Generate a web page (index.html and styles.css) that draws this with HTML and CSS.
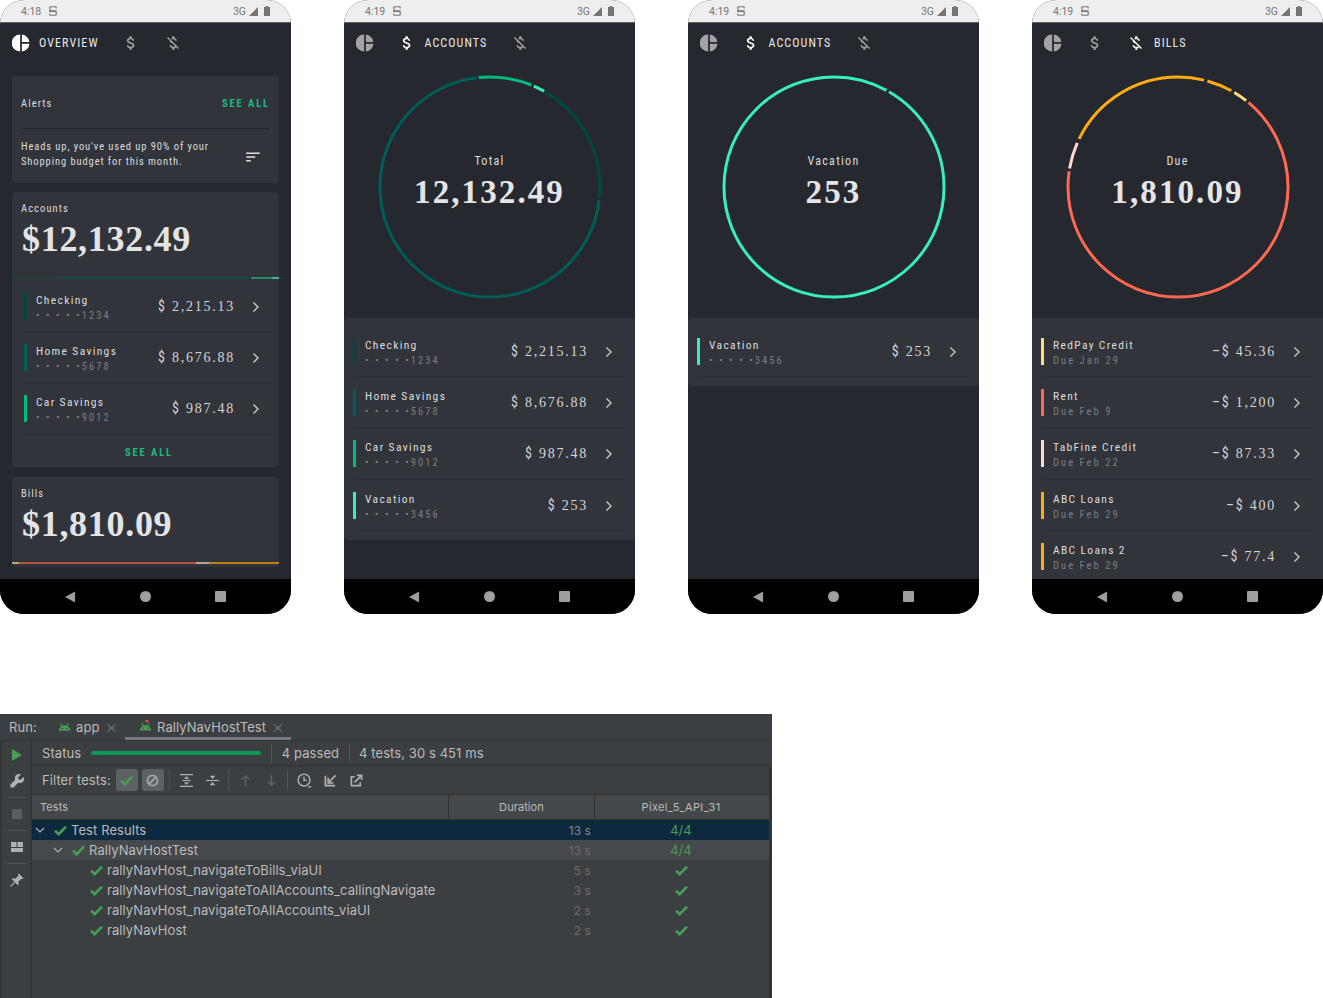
FILE: index.html
```html
<!DOCTYPE html>
<html lang="en">
<head>
<meta charset="utf-8">
<title>Rally tests</title>
<link rel="stylesheet" href="styles.css">
</head>
<body>
<svg class="sprite" aria-hidden="true">
  <symbol id="pie" viewBox="0 0 16 16"><path d="M7.2.5v15A7.5 7.5 0 0 1 7.2.5z"/><path d="M8.8.5A7.5 7.5 0 0 1 15.500 7H8.800z"/><path d="M8.8 8.600h6.700a7.500 7.500 0 0 1-6.700 6.900z"/></symbol>
  <symbol id="dollar" viewBox="0 0 24 24"><path d="M11.8 10.9c-2.27-.59-3-1.2-3-2.15 0-1.09 1.01-1.85 2.7-1.85 1.78 0 2.44.85 2.5 2.1h2.21c-.07-1.72-1.12-3.3-3.21-3.81V3h-3v2.16c-1.94.42-3.5 1.68-3.5 3.61 0 2.31 1.91 3.46 4.7 4.13 2.5.6 3 1.48 3 2.41 0 .69-.49 1.79-2.7 1.79-2.06 0-2.87-.92-2.98-2.1h-2.2c.12 2.19 1.76 3.42 3.68 3.83V21h3v-2.15c1.95-.37 3.5-1.5 3.5-3.55 0-2.84-2.43-3.81-4.7-4.4z"/></symbol>
  <symbol id="off" viewBox="0 0 24 24"><path d="M12.5 6.9c1.78 0 2.44.85 2.5 2.1h2.21c-.07-1.72-1.12-3.3-3.21-3.81V3h-3v2.16c-.53.12-1.03.3-1.48.54l1.47 1.47c.41-.17.91-.27 1.51-.27zM5.33 4.06L4.06 5.33 7.5 8.77c0 2.08 1.56 3.21 3.91 3.91l3.51 3.51c-.34.48-1.05.91-2.42.91-2.06 0-2.87-.92-2.98-2.1h-2.2c.12 2.19 1.76 3.42 3.68 3.83V21h3v-2.15c.96-.18 1.82-.55 2.45-1.12l2.22 2.22 1.27-1.27L5.33 4.06z"/></symbol>
  <symbol id="sort" viewBox="0 0 24 24"><path d="M3 18h6v-2H3v2zM3 6v2h18V6H3zm0 7h12v-2H3v2z"/></symbol>
  <symbol id="chev" viewBox="0 0 8 12"><path d="M1.5 1.5 6 6l-4.5 4.5" fill="none" stroke="currentColor" stroke-width="1.4"/></symbol>
  <symbol id="sig" viewBox="0 0 10 10"><path d="M10 0v10H0z"/></symbol>
  <symbol id="batt" viewBox="0 0 6 10"><path d="M2 0h2v1h2v9H0V1h2z"/></symbol>
  <symbol id="sim" viewBox="0 0 10 12"><path d="M2.500 1.200h5a1.300 1.300 0 0 1 1.300 1.300v1H7.600v-1a.3.3 0 0 0-.3-.3H2.700a.3.3 0 0 0-.3.3v2.700h5.200a1.300 1.300 0 0 1 1.200 1.300v2.900a1.300 1.300 0 0 1-1.300 1.300h-5a1.300 1.300 0 0 1-1.300-1.300v-1h1.200v1c0 .2.1.3.3.3h4.600c.2 0 .3-.1.3-.3V6.900H1.200V2.500a1.300 1.300 0 0 1 1.300-1.300z"/></symbol>
  <symbol id="check" viewBox="0 0 14 12"><path d="M1 6.300 5 10 13 1.800" fill="none" stroke="#499c54" stroke-width="3"/></symbol>
  <symbol id="droid" viewBox="0 0 14 10"><path d="M1 9a6 6 0 0 1 12 0z" fill="#499c54"/><path d="M3 1l1.600 3M11 1 9.400 4" stroke="#499c54" stroke-width="1.100" fill="none"/><circle cx="4.500" cy="6.500" r=".8" fill="#3c3f41"/><circle cx="9.500" cy="6.500" r=".8" fill="#3c3f41"/></symbol>
  <symbol id="back" viewBox="0 0 12 12"><path d="M11 0v12L0 6z"/></symbol>
</svg>

<main class="phones">

  <section class="phone">
    <header class="status"><span class="clock">4:18</span><svg class="ic-sim"><use href="#sim"/></svg><span class="net">3G</span><svg class="ic-sig"><use href="#sig"/></svg><svg class="ic-batt"><use href="#batt"/></svg></header>
    <nav class="tabs">
      <svg class="tab-ic on"><use href="#pie"/></svg><span class="tab-label">OVERVIEW</span>
      <svg class="tab-ic"><use href="#dollar"/></svg>
      <svg class="tab-ic"><use href="#off"/></svg>
    </nav>
    <div class="screen overview">
      <article class="card alerts">
        <div class="alerts-head"><span class="label">Alerts</span><span class="see">SEE ALL</span></div>
        <div class="alerts-body"><p class="alert-text">Heads up, you've used up 90% of your<br>Shopping budget for this month.</p><svg class="sort-ic"><use href="#sort"/></svg></div>
      </article>
      <article class="card accounts-card">
        <div class="label card-label">Accounts</div>
        <div class="big">$12,132.49</div>
        <div class="meter">
          <i class="m-check w48"></i><i class="m-home w191"></i><i class="m-car w21"></i><i class="m-vac w6"></i>
        </div>
        <div class="card-rows">
          <div class="row"><i class="bar c-check"></i><div class="row-text"><div class="row-name">Checking</div><div class="row-sub">• • • • •1234</div></div><div class="amt"><span class="cur">$</span> 2,215.13</div><svg class="chev"><use href="#chev"/></svg></div>
          <div class="row"><i class="bar c-home"></i><div class="row-text"><div class="row-name">Home Savings</div><div class="row-sub">• • • • •5678</div></div><div class="amt"><span class="cur">$</span> 8,676.88</div><svg class="chev"><use href="#chev"/></svg></div>
          <div class="row"><i class="bar c-car"></i><div class="row-text"><div class="row-name">Car Savings</div><div class="row-sub">• • • • •9012</div></div><div class="amt"><span class="cur">$</span> 987.48</div><svg class="chev"><use href="#chev"/></svg></div>
        </div>
        <div class="see see-center">SEE ALL</div>
      </article>
      <article class="card bills-card">
        <div class="label card-label">Bills</div>
        <div class="big">$1,810.09</div>
        <div class="meter bills-meter">
          <i class="m-red w7"></i><i class="m-rent w177"></i><i class="m-tab w13"></i><i class="m-abc w70"></i>
        </div>
      </article>
    </div>
    <footer class="navbar"><svg class="nav-back"><use href="#back"/></svg><i class="nav-home"></i><i class="nav-recent"></i></footer>
  </section>

  <section class="phone">
    <header class="status"><span class="clock">4:19</span><svg class="ic-sim"><use href="#sim"/></svg><span class="net">3G</span><svg class="ic-sig"><use href="#sig"/></svg><svg class="ic-batt"><use href="#batt"/></svg></header>
    <nav class="tabs">
      <svg class="tab-ic"><use href="#pie"/></svg>
      <svg class="tab-ic on"><use href="#dollar"/></svg><span class="tab-label">ACCOUNTS</span>
      <svg class="tab-ic"><use href="#off"/></svg>
    </nav>
    <div class="screen">
      <div class="ring-wrap">
        <svg class="ring" viewBox="0 0 224 224">
          <circle class="arc" pathLength="360" cx="112" cy="112" r="110" stroke="#04b97f" stroke-dasharray="22 332 6 0"/>
          <circle class="arc" pathLength="360" cx="112" cy="112" r="110" stroke="#37efba" stroke-dasharray="6 360" stroke-dashoffset="-23.500"/>
          <circle class="arc" pathLength="360" cx="112" cy="112" r="110" stroke="#004940" stroke-dasharray="65 360" stroke-dashoffset="-30.500"/>
          <circle class="arc" pathLength="360" cx="112" cy="112" r="110" stroke="#005d57" stroke-dasharray="256 360" stroke-dashoffset="-97"/>
        </svg>
        <div class="ring-text"><div class="ring-label">Total</div><div class="ring-num">12,132.49</div></div>
      </div>
      <div class="list">
        <div class="row"><i class="bar c-check"></i><div class="row-text"><div class="row-name">Checking</div><div class="row-sub">• • • • •1234</div></div><div class="amt"><span class="cur">$</span> 2,215.13</div><svg class="chev"><use href="#chev"/></svg></div>
        <div class="row"><i class="bar c-home"></i><div class="row-text"><div class="row-name">Home Savings</div><div class="row-sub">• • • • •5678</div></div><div class="amt"><span class="cur">$</span> 8,676.88</div><svg class="chev"><use href="#chev"/></svg></div>
        <div class="row"><i class="bar c-car"></i><div class="row-text"><div class="row-name">Car Savings</div><div class="row-sub">• • • • •9012</div></div><div class="amt"><span class="cur">$</span> 987.48</div><svg class="chev"><use href="#chev"/></svg></div>
        <div class="row"><i class="bar c-vac"></i><div class="row-text"><div class="row-name">Vacation</div><div class="row-sub">• • • • •3456</div></div><div class="amt"><span class="cur">$</span> 253</div><svg class="chev"><use href="#chev"/></svg></div>
      </div>
    </div>
    <footer class="navbar"><svg class="nav-back"><use href="#back"/></svg><i class="nav-home"></i><i class="nav-recent"></i></footer>
  </section>

  <section class="phone">
    <header class="status"><span class="clock">4:19</span><svg class="ic-sim"><use href="#sim"/></svg><span class="net">3G</span><svg class="ic-sig"><use href="#sig"/></svg><svg class="ic-batt"><use href="#batt"/></svg></header>
    <nav class="tabs">
      <svg class="tab-ic"><use href="#pie"/></svg>
      <svg class="tab-ic on"><use href="#dollar"/></svg><span class="tab-label">ACCOUNTS</span>
      <svg class="tab-ic"><use href="#off"/></svg>
    </nav>
    <div class="screen">
      <div class="ring-wrap">
        <svg class="ring" viewBox="0 0 224 224">
          <circle class="arc" pathLength="360" cx="112" cy="112" r="110" stroke="#37efba" stroke-dasharray="28.500 1.500 330 0"/>
        </svg>
        <div class="ring-text"><div class="ring-label">Vacation</div><div class="ring-num">253</div></div>
      </div>
      <div class="list">
        <div class="row"><i class="bar c-vac"></i><div class="row-text"><div class="row-name">Vacation</div><div class="row-sub">• • • • •3456</div></div><div class="amt"><span class="cur">$</span> 253</div><svg class="chev"><use href="#chev"/></svg></div>
      </div>
    </div>
    <footer class="navbar"><svg class="nav-back"><use href="#back"/></svg><i class="nav-home"></i><i class="nav-recent"></i></footer>
  </section>

  <section class="phone">
    <header class="status"><span class="clock">4:19</span><svg class="ic-sim"><use href="#sim"/></svg><span class="net">3G</span><svg class="ic-sig"><use href="#sig"/></svg><svg class="ic-batt"><use href="#batt"/></svg></header>
    <nav class="tabs">
      <svg class="tab-ic"><use href="#pie"/></svg>
      <svg class="tab-ic"><use href="#dollar"/></svg>
      <svg class="tab-ic on"><use href="#off"/></svg><span class="tab-label">BILLS</span>
    </nav>
    <div class="screen">
      <div class="ring-wrap">
        <svg class="ring" viewBox="0 0 224 224">
          <circle class="arc" pathLength="360" cx="112" cy="112" r="110" stroke="#ffdc78" stroke-dasharray="7.500 360" stroke-dashoffset="-30.800"/>
          <circle class="arc" pathLength="360" cx="112" cy="112" r="110" stroke="#ff6951" stroke-dasharray="238.500 360" stroke-dashoffset="-39.800"/>
          <circle class="arc" pathLength="360" cx="112" cy="112" r="110" stroke="#ffd7d0" stroke-dasharray="14 360" stroke-dashoffset="-279.700"/>
          <circle class="arc" pathLength="360" cx="112" cy="112" r="110" stroke="#ffac12" stroke-dasharray="13.700 282.300 64 0"/>
          <circle class="arc" pathLength="360" cx="112" cy="112" r="110" stroke="#ffac12" stroke-dasharray="13.500 360" stroke-dashoffset="-15.500"/>
        </svg>
        <div class="ring-text"><div class="ring-label">Due</div><div class="ring-num">1,810.09</div></div>
      </div>
      <div class="list list-clip">
        <div class="row"><i class="bar c-red"></i><div class="row-text"><div class="row-name">RedPay Credit</div><div class="row-sub">Due Jan 29</div></div><div class="amt"><span class="cur">–$</span> 45.36</div><svg class="chev"><use href="#chev"/></svg></div>
        <div class="row"><i class="bar c-rent"></i><div class="row-text"><div class="row-name">Rent</div><div class="row-sub">Due Feb 9</div></div><div class="amt"><span class="cur">–$</span> 1,200</div><svg class="chev"><use href="#chev"/></svg></div>
        <div class="row"><i class="bar c-tab"></i><div class="row-text"><div class="row-name">TabFine Credit</div><div class="row-sub">Due Feb 22</div></div><div class="amt"><span class="cur">–$</span> 87.33</div><svg class="chev"><use href="#chev"/></svg></div>
        <div class="row"><i class="bar c-abc"></i><div class="row-text"><div class="row-name">ABC Loans</div><div class="row-sub">Due Feb 29</div></div><div class="amt"><span class="cur">–$</span> 400</div><svg class="chev"><use href="#chev"/></svg></div>
        <div class="row"><i class="bar c-abc"></i><div class="row-text"><div class="row-name">ABC Loans 2</div><div class="row-sub">Due Feb 29</div></div><div class="amt"><span class="cur">–$</span> 77.4</div><svg class="chev"><use href="#chev"/></svg></div>
      </div>
    </div>
    <footer class="navbar"><svg class="nav-back"><use href="#back"/></svg><i class="nav-home"></i><i class="nav-recent"></i></footer>
  </section>
</main>

<section class="ide">
  <div class="ide-tabs">
    <span class="run-label">Run:</span>
    <div class="ide-tab"><svg class="droid"><use href="#droid"/></svg><span>app</span><span class="x">×</span></div>
    <div class="ide-tab active"><svg class="droid flagged" viewBox="0 0 14 13"><use href="#droid" y="3" height="10" width="14"/><path d="M7 4V0.500h3.500V3H7" fill="#c75450"/></svg><span>RallyNavHostTest</span><span class="x">×</span></div>
  </div>
  <div class="ide-main">
    <aside class="ide-side">
      <svg class="side-ic" viewBox="0 0 12 14"><path d="M1 1v12l10-6z" fill="#499c54"/></svg>
      <svg class="side-ic" viewBox="0 0 16 16"><path d="M15.500 3.500 12.300 6.700 9.800 6.200 9.300 3.700 12.500.500A4.700 4.700 0 0 0 6 6.500L.5 12v3.500H4L9.500 10a4.700 4.700 0 0 0 6-6.500z" fill="#afb1b3"/></svg>
      <i class="side-div"></i>
      <i class="stop"></i>
      <i class="side-div"></i>
      <svg class="side-ic" viewBox="0 0 14 12"><path d="M1 1h5.500v5H1zM7.500 1H13v5H7.500zM1 7h12v4H1z" fill="#afb1b3"/></svg>
      <i class="side-div"></i>
      <svg class="side-ic" viewBox="0 0 16 16"><path d="M10 .5 15.500 6 14 7 13 6.500 9.500 10 10 13 9 14 2 7 3 6 6 6.500 9.500 3 9 2z" fill="#afb1b3"/><path d="M5.500 10.500.5 15.500" stroke="#afb1b3" stroke-width="1.200"/></svg>
    </aside>
    <div class="ide-content">
      <div class="status-row">
        <span>Status</span><i class="progress"></i><i class="vdiv"></i><span>4 passed</span><i class="vdiv"></i><span>4 tests, 30 s 451 ms</span>
      </div>
      <div class="filter-row">
        <span>Filter tests:</span>
        <span class="toggle t1"><svg class="tool-ic" viewBox="0 0 14 12"><use href="#check"/></svg></span>
        <span class="toggle t2"><svg class="tool-ic" viewBox="0 0 14 14"><circle cx="7" cy="7" r="5.500" fill="none" stroke="#9da5ab" stroke-width="2"/><path d="M3.200 10.800 10.800 3.200" stroke="#9da5ab" stroke-width="2"/></svg></span>
        <i class="vdiv short"></i>
        <svg class="tool-ic" viewBox="0 0 14 14"><path d="M0 .7h14M0 13.300h14M2.500 7h9" fill="none" stroke="#afb1b3" stroke-width="1.300"/><path d="M7 2.300 10 5H4zM7 11.700 10 9H4z" fill="#afb1b3"/></svg>
        <svg class="tool-ic" viewBox="0 0 14 14"><path d="M0 7h14" fill="none" stroke="#afb1b3" stroke-width="1.300"/><path d="M7 5.300 10 2H4zM7 8.700 10 12H4z" fill="#afb1b3"/></svg>
        <i class="vdiv short"></i>
        <svg class="tool-ic" viewBox="0 0 14 14"><path d="M7 13V2M3 6l4-4 4 4" fill="none" stroke="#5f6366" stroke-width="1.500"/></svg>
        <svg class="tool-ic" viewBox="0 0 14 14"><path d="M7 1v11M3 8l4 4 4-4" fill="none" stroke="#5f6366" stroke-width="1.500"/></svg>
        <i class="vdiv short"></i>
        <svg class="tool-ic clock-ic" viewBox="0 0 16 16"><circle cx="7.500" cy="7.500" r="6.300" fill="none" stroke="#afb1b3" stroke-width="1.500"/><path d="M7.500 3.800v4h3" fill="none" stroke="#afb1b3" stroke-width="1.400"/><path d="M11 14h5l-2.500 2z" fill="#afb1b3"/></svg>
        <svg class="tool-ic" viewBox="0 0 14 14"><path d="M1.500 2v10.500H12M4.500 9.500l8-8M4.500 4v5.500H10" fill="none" stroke="#afb1b3" stroke-width="1.800"/></svg>
        <svg class="tool-ic" viewBox="0 0 14 14"><path d="M5 3H1.500v9.500H11V9M5 9l7.500-7.500M7.500 1.500h5V6.500" fill="none" stroke="#afb1b3" stroke-width="1.800"/></svg>
      </div>
      <div class="thead"><span class="col-a">Tests</span><span class="col-b">Duration</span><span class="col-c col-px">Pixel_5_API_31</span></div>
      <div class="trow selected"><span class="col-a lvl0"><svg class="twist" viewBox="0 0 10 6"><path d="M1 1l4 4 4-4" fill="none" stroke="#afb1b3" stroke-width="1.200"/></svg><svg class="chk"><use href="#check"/></svg>Test Results</span><span class="col-b time">13 s</span><span class="col-c pass">4/4</span></div>
      <div class="trow group"><span class="col-a lvl1"><svg class="twist" viewBox="0 0 10 6"><path d="M1 1l4 4 4-4" fill="none" stroke="#afb1b3" stroke-width="1.200"/></svg><svg class="chk"><use href="#check"/></svg>RallyNavHostTest</span><span class="col-b time dim">13 s</span><span class="col-c pass">4/4</span></div>
      <div class="trow"><span class="col-a lvl2"><svg class="chk"><use href="#check"/></svg>rallyNavHost_navigateToBills_viaUI</span><span class="col-b time dim">5 s</span><span class="col-c"><svg class="chk"><use href="#check"/></svg></span></div>
      <div class="trow"><span class="col-a lvl2"><svg class="chk"><use href="#check"/></svg>rallyNavHost_navigateToAllAccounts_callingNavigate</span><span class="col-b time dim">3 s</span><span class="col-c"><svg class="chk"><use href="#check"/></svg></span></div>
      <div class="trow"><span class="col-a lvl2"><svg class="chk"><use href="#check"/></svg>rallyNavHost_navigateToAllAccounts_viaUI</span><span class="col-b time dim">2 s</span><span class="col-c"><svg class="chk"><use href="#check"/></svg></span></div>
      <div class="trow"><span class="col-a lvl2"><svg class="chk"><use href="#check"/></svg>rallyNavHost</span><span class="col-b time dim">2 s</span><span class="col-c"><svg class="chk"><use href="#check"/></svg></span></div>
    </div>
  </div>
</section>
</body>
</html>
```
FILE: styles.css
```css
* { box-sizing: border-box; }
html, body { margin: 0; height: 100%; background: #fff; overflow: hidden; }
body { width: 1323px; height: 998px; font-family: Roboto, "Liberation Sans", sans-serif; }
.sprite { display: none; }
p { margin: 0; }
i { display: block; }

.phones { display: flex; gap: 53px; height: 614px; }
.phone { width: 291px; height: 614px; display: flex; flex-direction: column; background: #26282f; border-radius: 24px; overflow: hidden; font-stretch: 75%; }

.status { height: 23px; flex: none; background: #eeeeee; border-bottom: 1px solid #5c5e63; display: flex; align-items: center; padding: 0 21px; color: #757575; font-size: 10.5px; fill: #757575; font-stretch: 100%; }
.clock { width: 27px; }
.ic-sim { width: 10px; height: 12px; }
.net { margin-left: auto; }
.ic-sig { width: 9px; height: 9px; margin-left: 3px; }
.ic-batt { width: 6px; height: 10px; margin-left: 6px; }

.tabs { height: 40px; flex: none; display: flex; align-items: center; padding-left: 12px; gap: 23.5px; color: #fff; }
.tab-ic { width: 18px; height: 18px; fill: #a3a4a7; flex: none; }
.tab-ic.on { fill: #fff; }
.tab-label { font-size: 12px; letter-spacing: 1.100px; color: #e8e8e8; margin-left: -14.5px; white-space: nowrap; }

.screen { flex: 1; min-height: 0; display: flex; flex-direction: column; overflow: hidden; }
.overview { padding: 13px 12px 0; gap: 9px; }

.card { background: #32343b; border-radius: 4px; flex: none; }
.label { font-size: 10.5px; letter-spacing: 1.100px; color: #dcdcdd; }
.see { font-size: 10.5px; font-weight: 700; letter-spacing: 1.900px; color: #1eb980; }

.alerts { height: 107px; padding: 0 9px; }
.alerts-head { height: 53px; display: flex; justify-content: space-between; align-items: center; border-bottom: 1px solid #26282f; padding-top: 2px; }
.alerts-body { display: flex; align-items: center; justify-content: space-between; height: 54px; padding: 0 8px 4px 0; }
.alert-text { font-size: 10.5px; line-height: 15px; letter-spacing: .91px; color: #dcdcdd; white-space: nowrap; }
.sort-ic { width: 18px; height: 18px; fill: #e0e0e0; margin-top: 6px; }

.accounts-card { height: 275px; display: flex; flex-direction: column; }
.bills-card { height: 90px; margin-top: 1px; display: flex; flex-direction: column; }
.card-label { padding: 10px 9px 0; line-height: 14px; height: 24px; }
.big { font-family: "Liberation Serif", serif; font-weight: 700; font-stretch: 100%; font-size: 36px; line-height: 46px; letter-spacing: .7px; color: #e4e4e5; padding-left: 10px; white-space: nowrap; }
.meter { display: flex; height: 2px; margin-top: 15px; flex: none; }
.w48 { width: 48px; } .w191 { width: 191px; } .w21 { width: 21px; } .w6 { width: 7px; }
.w7 { width: 7px; } .w177 { width: 177px; } .w13 { width: 13px; } .w70 { width: 70px; }
.m-check { background: #2a3b3c; }
.m-home { background: #104a47; }
.m-car { background: #28896c; }
.m-vac { background: #3fb393; }
.m-rent { background: #b9513f; }
.m-abc { background: #bd8216; }
.m-red { background: #bda765; }
.m-tab { background: #b9a09c; }

.c-check { background: #004940; }
.c-home { background: #005d57; }
.c-car { background: #04b97f; }
.c-vac { background: #37efba; }
.c-red { background: #ffdc78; }
.c-rent { background: #ff6951; }
.c-tab { background: #ffd7d0; }
.c-abc { background: #ffac12; }

.card-rows { padding: 2px 6px 0 12px; }
.see-center { text-align: center; line-height: 14px; margin-top: 11.4px; padding-left: 7px; }

.row { height: 51.2px; display: flex; align-items: flex-start; padding-top: 12px; border-bottom: 1px solid #2a2c33; color: #dcdcdd; }
.bar { width: 3px; height: 27px; flex: none; }
.row-text { margin-left: 9px; }
.row-name { font-size: 11.5px; line-height: 14px; letter-spacing: 1.350px; white-space: nowrap; }
.row-sub { font-size: 10.500px; line-height: 14px; letter-spacing: 2.050px; color: #7b7d82; margin-top: 2px; white-space: nowrap; }
.amt { margin-left: auto; margin-right: 17px; font-family: "Liberation Serif", serif; font-stretch: 100%; font-size: 14px; line-height: 27px; letter-spacing: 1.750px; color: #d5d5d6; white-space: nowrap; }
.cur { font-family: Roboto, sans-serif; font-stretch: 75%; }
.chev { width: 8px; height: 12px; color: #c9c9cb; margin: 8px 13px 0 0; flex: none; }

.ring-wrap { height: 255px; flex: none; display: grid; justify-items: center; padding-top: 12px; }
.ring { grid-area: 1 / 1; width: 224px; height: 224px; transform: rotate(-90deg); }
.arc { fill: none; stroke-width: 3px; }
.ring-text { grid-area: 1 / 1; width: 224px; height: 224px; text-align: center; padding-top: 78px; color: #e5e5e6; }
.ring-label { font-size: 12px; line-height: 16px; letter-spacing: 1.300px; color: #dcdcdd; }
.ring-num { font-family: "Liberation Serif", serif; font-weight: 700; font-stretch: 100%; font-size: 33px; line-height: 44px; letter-spacing: 2.100px; margin-top: 1px; }

.list { background: #32343b; border-radius: 4px; padding: 8px 9px 9px; flex: none; }
.list-clip { padding-bottom: 0; flex: 1; overflow: hidden; border-radius: 0; }

.navbar { height: 35px; flex: none; background: #000; display: flex; align-items: center; justify-content: center; gap: 64px; }
.nav-back { width: 11px; height: 12px; fill: #9e9e9e; }
.nav-home { width: 11px; height: 11px; border-radius: 50%; background: #9e9e9e; }
.nav-recent { width: 11px; height: 11px; border-radius: 1px; background: #9e9e9e; }

.ide { width: 772px; height: 284px; margin-top: 100px; background: #3c3f41; color: #bbbbbb; font-family: Inter, "Liberation Sans", sans-serif; font-size: 13px; letter-spacing: .08px; display: flex; flex-direction: column; overflow: hidden; }
.ide-tabs { height: 27px; flex: none; display: flex; align-items: center; border-bottom: 1px solid #323232; padding-left: 9px; }
.run-label { width: 49px; }
.ide-tab { display: flex; align-items: center; height: 26px; width: 67px; }
.ide-tab.active { width: 166px; padding-left: 14px; border-bottom: 3px solid #747a80; padding-top: 2px; }
.droid { width: 13px; height: 10px; margin-right: 5px; flex: none; }
.droid.flagged { height: 13px; margin-top: -3px; }
.x { margin-left: 6px; color: #6e7173; font-size: 18px; font-weight: 300; line-height: 18px; }

.ide-main { flex: 1; display: flex; min-height: 0; background: linear-gradient(#3c3f41 0 26px, #313335 26px) right top / 3px 100% no-repeat; }
.ide-side { width: 32px; flex: none; border-right: 1px solid #323232; border-left: 2px solid #333537; display: flex; flex-direction: column; align-items: center; padding-top: 7px; }
.side-ic { width: 14px; height: 14px; flex: none; }
.ide-side .side-ic + .side-ic { margin-top: 12px; }
.side-div { width: 20px; height: 1px; background: #515456; margin: 9px 0; }
.stop { width: 10px; height: 10px; background: #5a5d5f; margin: 2px 0; }

.ide-content { flex: 1; display: flex; flex-direction: column; margin-right: 3px; }
.status-row { height: 25px; flex: none; display: flex; align-items: center; padding-left: 10px; border-bottom: 1px solid #323232; }
.progress { width: 170px; height: 4px; border-radius: 2px; background: #0a9a5a; margin: 0 10px; }
.vdiv { width: 1px; height: 19px; background: #515456; margin: 0 9.500px 0 0; }
.status-row span:nth-of-type(2) { margin-right: 9.500px; }
.filter-row { height: 29px; flex: none; display: flex; align-items: center; padding-left: 10px; border-bottom: 1px solid #323232; }
.toggle { width: 22px; height: 22px; border-radius: 3px; background: #5c6164; display: grid; place-items: center; margin-right: 4px; }
.toggle.t1 { margin-left: 5px; }
.toggle.t2 { margin-right: 9px; }
.tool-ic { width: 13px; height: 13px; flex: none; }
.filter-row > .tool-ic { margin-right: 13px; }
.filter-row > .clock-ic { width: 15px; height: 15px; margin: 0 12px 0 -1px; }
.filter-row .vdiv { height: 20px; margin: 0 10px 0 -4px; }
.thead { height: 25px; flex: none; display: flex; align-items: center; font-size: 11px; background: #45484a; border-bottom: 1px solid #323232; color: #bbb; }
.col-a { width: 417px; flex: none; display: flex; align-items: center; white-space: nowrap; height: 100%; }
.col-b { width: 146px; flex: none; text-align: center; }
.col-c { width: 172px; flex: none; text-align: center; display: flex; align-items: center; justify-content: center; }
.col-px { letter-spacing: .35px; }
.thead .col-a { padding-left: 8px; border-right: 1px solid #323232; }
.thead .col-b { border-right: 1px solid #323232; line-height: 24px; }
.trow { height: 20px; flex: none; display: flex; align-items: center; }
.selected { background: #0d293e; }
.group { background: #46494b; }
.lvl0 { padding-left: 3px; }
.lvl1 { padding-left: 21px; }
.lvl2 { padding-left: 58px; }
.twist { width: 10px; height: 6px; margin-right: 9px; flex: none; }
.chk { width: 13px; height: 11px; margin-right: 4px; flex: none; }
.col-c .chk { margin-right: 0; }
.time { text-align: right; padding-right: 4px; color: #8a8d8f; font-size: 12px; }
.time.dim { color: #6a6d70; }
.selected .time { color: #7d8a94; }
.pass { color: #499c54; }
```
